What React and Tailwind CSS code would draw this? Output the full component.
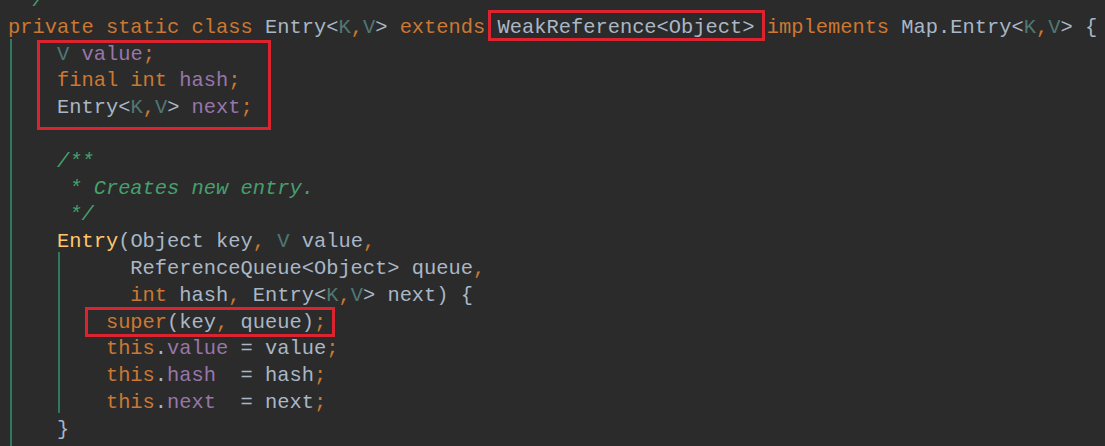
import React from 'react';

// token colours, Darcula-like
const K = 'text-[#cc7832]';
const D = 'text-[#a9b7c6]';
const F = 'text-[#9876aa]';
const T = 'text-[#507874]';
const C = 'text-[#46a06e] italic';
const M = 'text-[#ffc66d]';

const lines = [
  [[' */', C]],
  [
    ['private static class ', K], ['Entry<', D], ['K', T], [',', K], ['V', T], ['> ', D],
    ['extends ', K], ['WeakReference<Object> ', D], ['implements ', K], ['Map.Entry<', D],
    ['K', T], [',', K], ['V', T], ['> {', D],
  ],
  [['    ', D], ['V ', T], ['value', F], [';', K]],
  [['    final int ', K], ['hash', F], [';', K]],
  [['    Entry<', D], ['K', T], [',', K], ['V', T], ['> ', D], ['next', F], [';', K]],
  [[' ', D]],
  [['    /**', C]],
  [['     * Creates new entry.', C]],
  [['     */', C]],
  [['    ', D], ['Entry', M], ['(Object key', D], [', ', K], ['V ', T], ['value', D], [',', K]],
  [['          ReferenceQueue<Object> queue', D], [',', K]],
  [['          int ', K], ['hash', D], [', ', K], ['Entry<', D], ['K', T], [',', K], ['V', T], ['> next) {', D]],
  [['        super', K], ['(key', D], [', ', K], ['queue)', D], [';', K]],
  [['        this', K], ['.', D], ['value', F], [' = value', D], [';', K]],
  [['        this', K], ['.', D], ['hash', F], ['  = hash', D], [';', K]],
  [['        this', K], ['.', D], ['next', F], ['  = next', D], [';', K]],
  [['    }', D]],
];

function Box({ className }) {
  return <div className={`absolute border-[3px] border-[#dc2430] ${className}`} />;
}

export default function App() {
  return (
    <div className="relative w-[1105px] h-[446px] overflow-hidden bg-[#2b2b2b]">
      <div
        className="-mt-[12px] pl-2 text-[20.4px] leading-[26.8px] whitespace-pre"
        style={{ fontFamily: '"Liberation Mono", "DejaVu Sans Mono", monospace' }}
      >
        {lines.map((segs, i) => (
          <div key={i} className="h-[26.8px]">
            {segs.map(([text, cls], j) => (
              <span key={j} className={cls}>{text}</span>
            ))}
          </div>
        ))}
      </div>

      {/* indent guides */}
      <div className="absolute left-[10px] top-[39px] bottom-0 w-[2px] bg-[#2f7a5c]" />
      <div className="absolute left-[58px] top-[252px] h-[161px] w-[2px] bg-[#2f7a5c]" />

      {/* highlight boxes */}
      <Box className="left-[37px] top-[40px] w-[234px] h-[90px]" />
      <Box className="left-[488px] top-[10px] w-[277px] h-[31px]" />
      <Box className="left-[85px] top-[307px] w-[250px] h-[30px]" />
    </div>
  );
}
